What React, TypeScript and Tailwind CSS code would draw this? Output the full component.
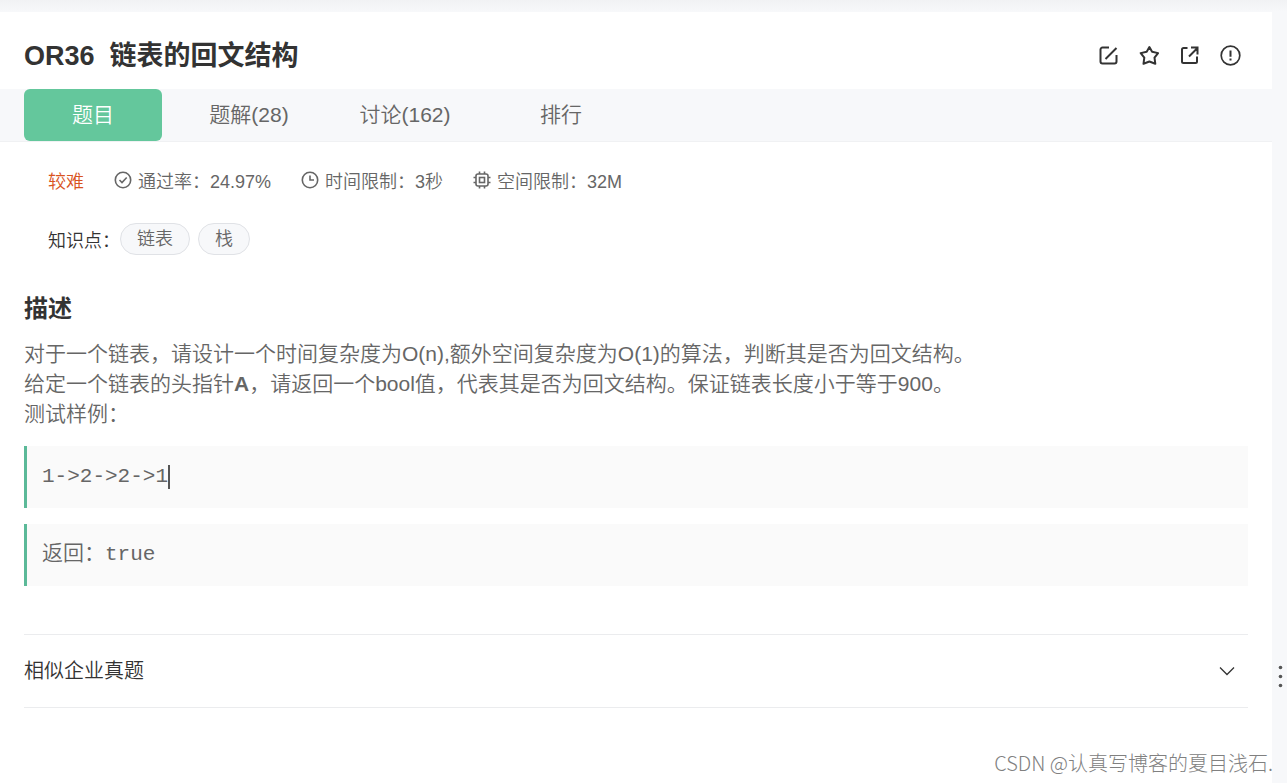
import { useState } from "react";

const tabs = ["题目", "题解(28)", "讨论(162)", "排行"];

const App = () => {
  const [activeTab, setActiveTab] = useState(0);

  return (
    <div className="relative flex min-h-screen flex-col bg-[#f7f8fa] font-['Liberation_Sans','Noto_Sans_CJK_SC',sans-serif] font-[350] text-[#666]">
      <div className="h-3 bg-linear-to-b from-[#f1f2f4] to-[#f7f8fa]"></div>

      <div className="flex grow">
        <main className="min-w-0 grow bg-white">
          <header className="flex h-[77px] items-center justify-between pb-0.5 pl-6 pr-[31px] pt-3">
            <h1 className="whitespace-pre text-[27px] font-bold leading-9 text-[#333]">
              {"OR36  链表的回文结构"}
            </h1>
            <div className="flex gap-5 text-[#333]">
              <IconButton label="编辑">
                <path d="M12 2.5H5.5a2 2 0 0 0-2 2v12a2 2 0 0 0 2 2h12a2 2 0 0 0 2-2V10M8.5 14L19.5 3" />
              </IconButton>
              <IconButton label="收藏">
                <path
                  strokeLinejoin="round"
                  d="M11.4 2l2.7 4.7 6 1.4-3.6 4.5.8 6.2-5.9-2.3-5.9 2.3.8-6.2-3.6-4.5 6-1.4z"
                />
              </IconButton>
              <IconButton label="分享">
                <path d="M8.5 3h-4A1.5 1.5 0 0 0 3 4.5v12A1.5 1.5 0 0 0 4.5 18h12a1.5 1.5 0 0 0 1.5-1.5v-5M10 11.5L18.5 3M12 2.5h6.5v7" />
              </IconButton>
              <IconButton label="反馈">
                <circle cx="10.5" cy="10.5" r="9.3" strokeWidth="1.7" />
                <path d="M10.5 5.5v6.2M10.5 13.5v2" />
              </IconButton>
            </div>
          </header>

          <nav
            role="tablist"
            className="flex gap-[18px] border-b border-[#f0f1f3] bg-[#f7f8fa] pl-6"
          >
            {tabs.map((tab, i) => (
              <button
                key={tab}
                role="tab"
                aria-selected={i === activeTab}
                onClick={() => setActiveTab(i)}
                className={`h-[52px] w-[138px] rounded-md text-[21px] ${
                  i === activeTab ? "bg-[#64c79c] text-white" : ""
                }`}
              >
                {tab}
              </button>
            ))}
          </nav>

          <section className="px-12 pt-6 text-lg">
            <div className="flex h-8 items-center gap-[30px]">
              <span className="text-[#d9531e]">较难</span>
              <Stat text="通过率：24.97%">
                <circle cx="9" cy="9" r="7.7" />
                <path d="M5.5 9L8 11.5l4.7-5" />
              </Stat>
              <Stat text="时间限制：3秒">
                <circle cx="9" cy="9" r="7.7" />
                <path d="M9 4.5V9h4" />
              </Stat>
              <Stat text="空间限制：32M">
                <rect x="3" y="3" width="12" height="12" rx="2" />
                <rect x="6.5" y="6.5" width="5" height="5" />
                <path d="M6.5 3V.5M11.5 3V.5M6.5 17.5V15M11.5 17.5V15M3 6.5H.5M3 11.5H.5M17.5 6.5H15M17.5 11.5H15" />
              </Stat>
            </div>

            <div className="mt-[25px] flex items-center gap-2">
              <span className="w-16 whitespace-nowrap pt-1 text-[#333]">
                知识点：
              </span>
              <Tag>链表</Tag>
              <Tag>栈</Tag>
            </div>
          </section>

          <section className="px-6 pt-9">
            <h2 className="text-2xl font-bold leading-9 text-[#333]">描述</h2>
            <div className="mt-3 text-[21px] leading-[30px]">
              <p>
                对于一个链表，请设计一个时间复杂度为O(n),额外空间复杂度为O(1)的算法，判断其是否为回文结构。
              </p>
              <p>
                给定一个链表的头指针<b className="font-bold">A</b>
                ，请返回一个bool值，代表其是否为回文结构。保证链表长度小于等于900。
              </p>
              <p>测试样例：</p>
            </div>
            <div className="mt-[17px] flex flex-col gap-4">
              <CodeBlock>
                {"1->2->2->1"}
                <span className="h-6 w-0.5 bg-[#555]"></span>
              </CodeBlock>
              <CodeBlock>返回：true</CodeBlock>
            </div>
          </section>

          <section className="mx-6 mt-12 border-y border-[#ebecee]">
            <button className="flex h-[72px] w-full items-center justify-between pr-3 text-xl text-[#333]">
              相似企业真题
              <svg
                viewBox="0 0 18 18"
                className="size-[18px] fill-none stroke-current"
                strokeWidth="1.3"
              >
                <path d="M2 5.5l7 7 7-7" />
              </svg>
            </button>
          </section>
        </main>

        {/* drag handle of the split pane */}
        <aside className="flex w-[15px] flex-col items-end pr-1 pt-[653px]">
          <svg viewBox="0 0 5 24" className="h-6 w-[5px] fill-[#555]">
            <circle cx="2.5" cy="2.5" r="1.8" />
            <circle cx="2.5" cy="11.5" r="1.8" />
            <circle cx="2.5" cy="20.5" r="1.8" />
          </svg>
        </aside>
      </div>

      <div className="absolute bottom-1 right-[14px] whitespace-nowrap font-['Noto_Sans_CJK_SC',sans-serif] text-xl font-light leading-8 text-[#808080]">
        CSDN @认真写博客的夏目浅石.
      </div>
    </div>
  );
};

const IconButton = ({
  label,
  children,
}: {
  label: string;
  children: React.ReactNode;
}) => {
  return (
    <button aria-label={label}>
      <svg
        viewBox="0 0 21 21"
        className="size-[21px] fill-none stroke-current"
        strokeWidth="2"
      >
        {children}
      </svg>
    </button>
  );
};

const Stat = ({
  text,
  children,
}: {
  text: string;
  children: React.ReactNode;
}) => {
  return (
    <div className="flex items-center gap-[6px]">
      <svg
        viewBox="0 0 18 18"
        className="mb-1 size-[18px] fill-none stroke-current"
        strokeWidth="1.6"
      >
        {children}
      </svg>
      <span>{text}</span>
    </div>
  );
};

const Tag = ({ children }: { children: React.ReactNode }) => {
  return (
    <a
      href="#"
      className="flex h-8 items-center rounded-full border border-[#e0e2e6] bg-[#f7f8fa] px-4"
    >
      {children}
    </a>
  );
};

const CodeBlock = ({ children }: { children: React.ReactNode }) => {
  return (
    <pre className="flex h-[62px] items-center border-l-[3px] border-[#5bb998] bg-[#fafafa] pl-[15px] font-['Liberation_Mono','Noto_Sans_CJK_SC',monospace] text-[21px]">
      {children}
    </pre>
  );
};

export default App;
